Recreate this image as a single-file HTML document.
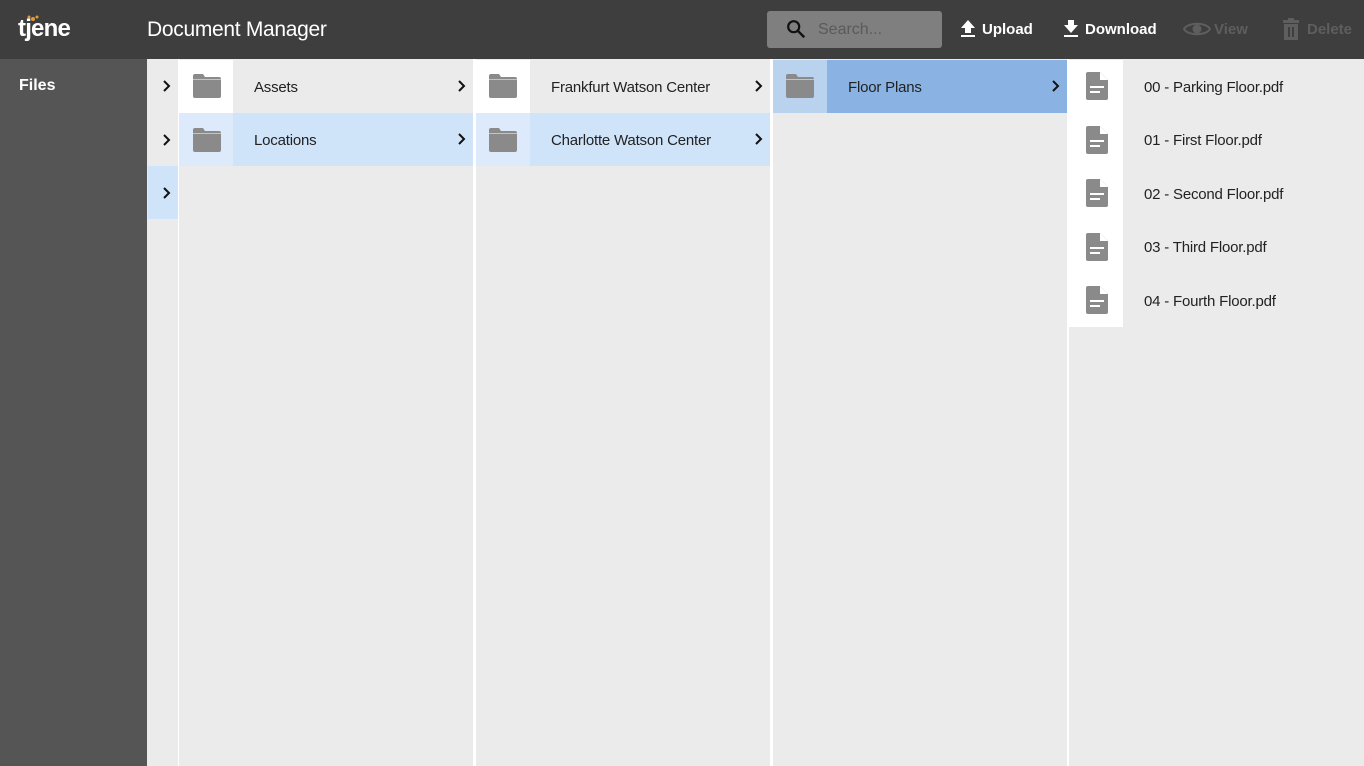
<!DOCTYPE html>
<html><head><style>
*{margin:0;padding:0;box-sizing:border-box}
body{width:1364px;height:766px;overflow:hidden;background:#ebebeb;font-family:"Liberation Sans",sans-serif;position:relative}
.hdr{position:absolute;left:0;top:0;width:1364px;height:59px;background:#3e3e3e}
.side{position:absolute;left:0;top:59px;width:147px;height:707px;background:#555}
.a{position:absolute}
.col{position:absolute;top:59px;height:707px;background:#ebebeb}
.sep{position:absolute;top:59px;height:707px;background:#fff}
.row{position:absolute;height:53px;font-size:15px;color:#222;line-height:55px;letter-spacing:-0.2px}
.ic{position:absolute;left:0;top:0;width:54px;height:53px}
.tx{position:absolute;left:54px;top:0;right:0;height:53px;padding-left:21px}
.chev{position:absolute;right:6px;top:20px}
.btn{position:absolute;top:20px;color:#fff;font-weight:bold;font-size:15px;line-height:20px}
</style></head><body>
<div class="hdr"></div>
<div class="a" style="left:18px;top:15px;color:#fff;font-weight:bold;font-size:24px;letter-spacing:-0.8px">tjene</div>
<svg class="a" style="left:26px;top:14px" width="14" height="8"><circle cx="7" cy="5" r="2" fill="#e39a3a"/><circle cx="3" cy="3" r="1.5" fill="#e39a3a"/><circle cx="11" cy="3" r="1.5" fill="#e39a3a"/></svg>
<div class="a" style="left:147px;top:18px;color:#fff;font-size:21px;letter-spacing:-0.3px">Document Manager</div>
<div class="a" style="left:767px;top:11px;width:175px;height:37px;background:#7f7f7f;border-radius:3px"></div>
<svg class="a" style="left:785px;top:18px" width="22" height="22" viewBox="0 0 24 24"><circle cx="9.5" cy="9.5" r="6" fill="none" stroke="#111" stroke-width="2.4"/><path d="M14 14l7 7" stroke="#111" stroke-width="2.6"/></svg>
<div class="a" style="left:818px;top:21px;color:#5a5a5a;font-size:16px">Search...</div>
<svg class="a" style="left:959px;top:19px" width="18" height="20" viewBox="0 0 18 20"><path d="M9 1l7 8h-4v5H6V9H2z" fill="#fff"/><rect x="2" y="16" width="14" height="2" fill="#fff"/></svg>
<div class="btn" style="left:982px">Upload</div>
<svg class="a" style="left:1062px;top:19px" width="18" height="20" viewBox="0 0 18 20"><path d="M9 14l7-8h-4V1H6v5H2z" fill="#fff"/><rect x="2" y="16" width="14" height="2" fill="#fff"/></svg>
<div class="btn" style="left:1085px">Download</div>
<svg class="a" style="left:1183px;top:20px" width="28" height="18" viewBox="0 0 28 18"><path d="M1 9C5 2 23 2 27 9C23 16 5 16 1 9z" fill="none" stroke="#5e5e5e" stroke-width="2"/><circle cx="14" cy="9" r="4.5" fill="#5e5e5e"/></svg>
<div class="btn" style="left:1214px;color:#5e5e5e">View</div>
<svg class="a" style="left:1282px;top:18px" width="18" height="23" viewBox="0 0 18 23"><rect x="1" y="2" width="16" height="3" fill="#5e5e5e"/><rect x="6" y="0" width="6" height="3" fill="#5e5e5e"/><path d="M2 6h14v16H2z" fill="#5e5e5e"/><rect x="6" y="9" width="2" height="10" fill="#3e3e3e"/><rect x="10" y="9" width="2" height="10" fill="#3e3e3e"/></svg>
<div class="btn" style="left:1307px;color:#5e5e5e">Delete</div>

<div class="side"></div>
<div class="a" style="left:19px;top:77px;color:#fff;font-weight:bold;font-size:16px">Files</div>

<div class="col" style="left:147px;width:31px"></div>
<div class="a" style="left:148px;top:166px;width:30px;height:53px;background:#cfe3f9"></div>
<div class="sep" style="left:178px;width:1px"></div>
<div class="sep" style="left:473px;width:3px"></div>
<div class="sep" style="left:770px;width:3px"></div>
<div class="sep" style="left:1067px;width:2px"></div>

<svg width="0" height="0" style="position:absolute"><defs>
<symbol id="fd" viewBox="0 0 28 24"><path d="M0 2Q0 0 2 0H10L12 3H26Q28 3 28 5V22Q28 24 26 24H2Q0 24 0 22z" fill="#8a8a8a"/><rect x="0" y="5" width="28" height="1" fill="#ddd" opacity=".7"/></symbol>
<symbol id="cv" viewBox="0 0 10 12"><path d="M2 1l5 5-5 5" fill="none" stroke="#111" stroke-width="2"/></symbol>
<symbol id="doc" viewBox="0 0 22 28"><path d="M2 0H14L22 8V26Q22 28 20 28H2Q0 28 0 26V2Q0 0 2 0z" fill="#8a8a8a"/><path d="M14 0V8H22" fill="#fff"/><rect x="4" y="14" width="14" height="2" fill="#fff"/><rect x="4" y="19" width="10" height="2" fill="#fff"/></symbol>
</defs></svg>

<svg class="a" style="left:162px;top:80px" width="10" height="12"><use href="#cv"/></svg>
<svg class="a" style="left:162px;top:134px" width="10" height="12"><use href="#cv"/></svg>
<svg class="a" style="left:162px;top:187px" width="10" height="12"><use href="#cv"/></svg>

<div class="row" style="left:179px;top:60px;width:294px"><div class="ic" style="background:#fff"></div><div class="tx">Assets</div><svg class="chev" width="10" height="12"><use href="#cv"/></svg></div>
<div class="row" style="left:179px;top:113px;width:294px"><div class="ic" style="background:#ddeafb"></div><div class="tx" style="background:#cfe3f9">Locations</div><svg class="chev" width="10" height="12"><use href="#cv"/></svg></div>
<svg class="a" style="left:193px;top:74px" width="28" height="24"><use href="#fd"/></svg>
<svg class="a" style="left:193px;top:128px" width="28" height="24"><use href="#fd"/></svg>

<div class="row" style="left:476px;top:60px;width:294px"><div class="ic" style="background:#fff"></div><div class="tx">Frankfurt Watson Center</div><svg class="chev" width="10" height="12"><use href="#cv"/></svg></div>
<div class="row" style="left:476px;top:113px;width:294px"><div class="ic" style="background:#ddeafb"></div><div class="tx" style="background:#cfe3f9">Charlotte Watson Center</div><svg class="chev" width="10" height="12"><use href="#cv"/></svg></div>
<svg class="a" style="left:489px;top:74px" width="28" height="24"><use href="#fd"/></svg>
<svg class="a" style="left:489px;top:128px" width="28" height="24"><use href="#fd"/></svg>

<div class="row" style="left:773px;top:60px;width:294px"><div class="ic" style="background:#b9d3ef"></div><div class="tx" style="background:#8ab3e4">Floor Plans</div><svg class="chev" width="10" height="12"><use href="#cv"/></svg></div>
<svg class="a" style="left:786px;top:74px" width="28" height="24"><use href="#fd"/></svg>

<div class="a" style="left:1069px;top:60px;width:54px;height:267px;background:#fff"></div>
<div class="row" style="left:1069px;top:60px;width:295px"><div class="tx">00 - Parking Floor.pdf</div></div>
<div class="row" style="left:1069px;top:113px;width:295px"><div class="tx">01 - First Floor.pdf</div></div>
<div class="row" style="left:1069px;top:167px;width:295px"><div class="tx">02 - Second Floor.pdf</div></div>
<div class="row" style="left:1069px;top:220px;width:295px"><div class="tx">03 - Third Floor.pdf</div></div>
<div class="row" style="left:1069px;top:274px;width:295px"><div class="tx">04 - Fourth Floor.pdf</div></div>
<svg class="a" style="left:1086px;top:72px" width="22" height="28"><use href="#doc"/></svg>
<svg class="a" style="left:1086px;top:126px" width="22" height="28"><use href="#doc"/></svg>
<svg class="a" style="left:1086px;top:179px" width="22" height="28"><use href="#doc"/></svg>
<svg class="a" style="left:1086px;top:233px" width="22" height="28"><use href="#doc"/></svg>
<svg class="a" style="left:1086px;top:286px" width="22" height="28"><use href="#doc"/></svg>
</body></html>
